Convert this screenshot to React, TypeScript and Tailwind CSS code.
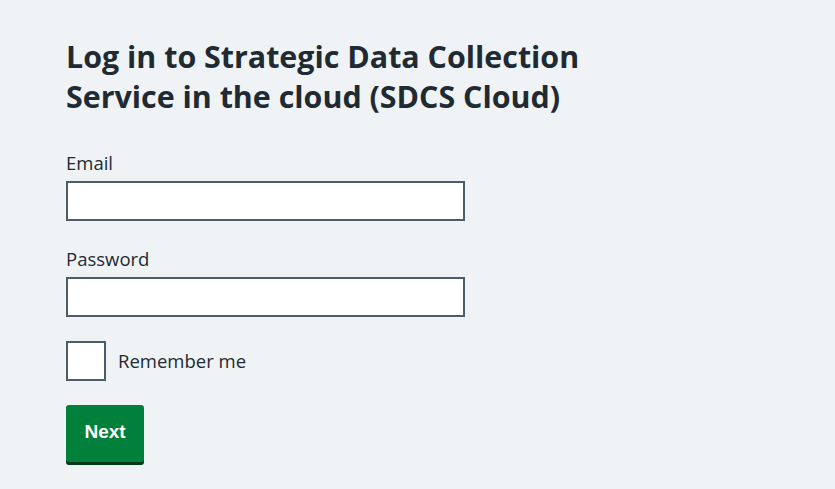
export default function App() {
  return (
    <div className="min-h-[489px] bg-[#eff3f5] text-[#1f2a33] font-['Open_Sans','Noto_Sans',sans-serif]">
      <div className="pl-[66px] pt-[37px]">
        <h1 className="text-[30.4px] leading-[40px] font-bold w-[560px]">
          Log in to Strategic Data Collection Service in the cloud (SDCS Cloud)
        </h1>
        <form className="mt-[34px] flex flex-col">
          <label className="text-[18.5px] leading-[24px]">Email</label>
          <input type="email" className="mt-[6px] w-[399px] h-[40px] border-2 border-[#4b5d6d] bg-white outline-none" />
          <label className="mt-[26px] text-[18.5px] leading-[24px]">Password</label>
          <input type="password" className="mt-[6px] w-[399px] h-[40px] border-2 border-[#4b5d6d] bg-white outline-none" />
          <label className="mt-[24px] flex items-center gap-[12px] text-[18.5px]">
            <span className="size-[40px] border-2 border-[#4b5d6d] bg-white" />
            Remember me
          </label>
          <div className="mt-[24px]">
            <button type="button" className="h-[57px] w-[78px] rounded-[3px] bg-[#00803a] shadow-[0_3px_0_#003b1a] text-white text-[19px] font-bold font-['Liberation_Sans',Arial,sans-serif] pb-[2px]">
              Next
            </button>
          </div>
        </form>
      </div>
    </div>
  )
}
